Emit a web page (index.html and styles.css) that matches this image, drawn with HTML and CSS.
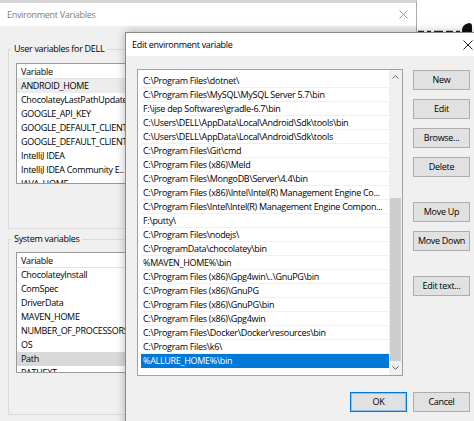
FILE: index.html
```html
<!DOCTYPE html>
<html lang="en">
<head>
<meta charset="utf-8">
<title>Environment Variables</title>
<link rel="stylesheet" href="styles.css">
</head>
<body>
<div class="desk">
  <svg class="bgmarks" width="58" height="12" viewBox="0 0 58 12">
    <path d="M2 10.5h6M11 10.5h4M18 10.5h9M30 10.5h7M40 10.5h4" stroke="#222" stroke-width="1.6"/>
    <path d="M46 9c0-3 2-5 4-6l3-1c2 0 3 1 3 3v6h-10z" fill="#111"/>
  </svg>

  <div class="win back">
    <div class="titlebar">
      <span class="title">Environment Variables</span>
      <svg class="close" width="9" height="9" viewBox="0 0 9 9"><path d="M0.5 0.5L8.5 8.5M8.5 0.5L0.5 8.5" stroke="#9a9a9a" stroke-width="1"/></svg>
    </div>
    <div class="wbody">
      <fieldset class="group group-user">
        <legend>User variables for DELL</legend>
        <div class="vlist">
          <div class="vhead">Variable</div>
          <div class="vrow hl">ANDROID_HOME</div>
          <div class="vrow">ChocolateyLastPathUpdate</div>
          <div class="vrow">GOOGLE_API_KEY</div>
          <div class="vrow">GOOGLE_DEFAULT_CLIENT_ID</div>
          <div class="vrow">GOOGLE_DEFAULT_CLIENT_SECRET</div>
          <div class="vrow">IntelliJ IDEA</div>
          <div class="vrow">IntelliJ IDEA Community E..</div>
          <div class="vrow">JAVA_HOME</div>
        </div>
      </fieldset>
      <fieldset class="group group-sys">
        <legend>System variables</legend>
        <div class="vlist">
          <div class="vhead">Variable</div>
          <div class="vrow">ChocolateyInstall</div>
          <div class="vrow">ComSpec</div>
          <div class="vrow">DriverData</div>
          <div class="vrow">MAVEN_HOME</div>
          <div class="vrow">NUMBER_OF_PROCESSORS</div>
          <div class="vrow">OS</div>
          <div class="vrow sel-gray">Path</div>
          <div class="vrow">PATHEXT</div>
        </div>
      </fieldset>
    </div>
  </div>

  <div class="win front">
    <div class="titlebar front-title">
      <span class="title">Edit environment variable</span>
      <svg class="close" width="10" height="10" viewBox="0 0 10 10"><path d="M0.5 0.5L9.5 9.5M9.5 0.5L0.5 9.5" stroke="#222" stroke-width="1"/></svg>
    </div>
    <div class="fbody">
      <div class="frow">
        <div class="plist">
          <div class="items">
            <div class="item">C:\Program Files\dotnet\</div>
            <div class="item">C:\Program Files\MySQL\MySQL Server 5.7\bin</div>
            <div class="item">F:\ijse dep Softwares\gradle-6.7\bin</div>
            <div class="item">C:\Users\DELL\AppData\Local\Android\Sdk\tools\bin</div>
            <div class="item">C:\Users\DELL\AppData\Local\Android\Sdk\tools</div>
            <div class="item">C:\Program Files\Git\cmd</div>
            <div class="item">C:\Program Files (x86)\Meld</div>
            <div class="item">C:\Program Files\MongoDB\Server\4.4\bin</div>
            <div class="item">C:\Program Files (x86)\Intel\Intel(R) Management Engine Co...</div>
            <div class="item">C:\Program Files\Intel\Intel(R) Management Engine Compon...</div>
            <div class="item">F:\putty\</div>
            <div class="item">C:\Program Files\nodejs\</div>
            <div class="item">C:\ProgramData\chocolatey\bin</div>
            <div class="item">%MAVEN_HOME%\bin</div>
            <div class="item">C:\Program Files (x86)\Gpg4win\..\GnuPG\bin</div>
            <div class="item">C:\Program Files (x86)\GnuPG</div>
            <div class="item">C:\Program Files (x86)\GnuPG\bin</div>
            <div class="item">C:\Program Files (x86)\Gpg4win</div>
            <div class="item">C:\Program Files\Docker\Docker\resources\bin</div>
            <div class="item">C:\Program Files\k6\</div>
            <div class="item selected">%ALLURE_HOME%\bin</div>
          </div>
          <div class="scrollbar">
            <div class="sb-btn"><svg width="7" height="4" viewBox="0 0 7 4"><path d="M0.5 3.5L3.5 0.7L6.5 3.5" fill="none" stroke="#606060" stroke-width="1"/></svg></div>
            <div class="sb-track"><div class="sb-thumb"></div></div>
            <div class="sb-btn"><svg width="7" height="4" viewBox="0 0 7 4"><path d="M0.5 0.5L3.5 3.3L6.5 0.5" fill="none" stroke="#606060" stroke-width="1"/></svg></div>
          </div>
        </div>
        <div class="btncol">
          <div class="btn">New</div>
          <div class="btn">Edit</div>
          <div class="btn">Browse...</div>
          <div class="btn">Delete</div>
          <div class="btn gap-lg">Move Up</div>
          <div class="btn">Move Down</div>
          <div class="btn gap-lg">Edit text...</div>
        </div>
      </div>
      <div class="actions">
        <div class="btn btn-default">OK</div>
        <div class="btn">Cancel</div>
      </div>
    </div>
  </div>
</div>
</body>
</html>
```

FILE: styles.css
```css
* { box-sizing: border-box; }
html, body { margin: 0; padding: 0; }
body {
  width: 474px;
  height: 421px;
  overflow: hidden;
  background: #ffffff;
  font-family: "Open Sans", "Noto Sans", sans-serif;
  font-size: 9px;
  letter-spacing: -0.3px;
  color: #000;
}
.desk { position: relative; width: 474px; height: 421px; overflow: hidden; }

.bgmarks { position: absolute; left: 416px; top: 21px; }

.win { position: absolute; background: #f0f0f0; }

.titlebar {
  display: flex;
  align-items: center;
  justify-content: space-between;
  height: 23px;
  background: #fff;
  white-space: nowrap;
}

/* back window */
.back {
  left: -1px;
  top: 0;
  width: 418px;
  height: 440px;
  border: 1px solid #a9a9a9;
  border-top: 3px solid #d5d5d5;
}
.back .titlebar { padding: 0 8px 0 7px; }
.back .title { color: #7d7d7d; }
.wbody { padding: 16px 0 0 8px; }

.group {
  margin: 0;
  padding: 7px 7px 44px 7px;
  border: 1px solid #dadada;
  width: 420px;
  min-width: 0;
}
.group legend {
  padding: 0 3px;
  margin-left: -5px;
  line-height: 14px;
  font-size: 9px;
}
.group-sys { margin-top: 3px; padding-top: 6px; padding-bottom: 41px; }

.vlist {
  height: 121px;
  width: 400px;
  background: #fff;
  border: 1px solid #9a9a9a;
  padding-top: 1px;
  overflow: hidden;
}
.vhead, .vrow {
  height: 14px;
  line-height: 14px;
  padding-left: 4px;
  white-space: nowrap;
  overflow: hidden;
}
.vhead { box-shadow: inset 0 -1px 0 #e5e5e5; }
.vrow.hl { background: #ececec; }
.vrow.sel-gray { background: #d9d9d9; }

/* front dialog */
.front {
  left: 125px;
  top: 32px;
  width: 358px;
  height: 400px;
  border: 1px solid #8a8a8a;
  box-shadow: 0 0 9px rgba(0, 0, 0, 0.28);
}
.front-title { padding: 0 9px 0 6px; height: 23px; }
.front .title { color: #000; }

.fbody { padding: 13px 12px 0 11px; }
.frow { display: flex; gap: 10px; align-items: flex-start; }

.plist {
  display: flex;
  width: 266px;
  height: 307px;
  background: #fff;
  border: 1px solid #a0a0a0;
}
.items {
  flex: 1;
  padding: 4px 0 0 3px;
  overflow: hidden;
}
.item {
  height: 14px;
  line-height: 13px;
  padding-left: 2px;
  border-bottom: 1px solid #f0f0f0;
  white-space: nowrap;
  overflow: hidden;
}
.item.selected { background: #0078d7; color: #fff; border-bottom-color: #0078d7; }

.scrollbar {
  width: 13px;
  display: flex;
  flex-direction: column;
  background: #f0f0f0;
}
.sb-btn {
  height: 14px;
  display: flex;
  align-items: center;
  justify-content: center;
}
.sb-track { flex: 1; display: flex; flex-direction: column; justify-content: flex-end; }
.sb-thumb { height: 163px; margin: 0 1px; background: #cdcdcd; }

.btncol { display: flex; flex-direction: column; gap: 9px; padding-top: 1px; width: 57px; }
.btn {
  width: 57px;
  height: 20px;
  line-height: 18px;
  text-align: center;
  background: #e1e1e1;
  border: 1px solid #adadad;
  white-space: nowrap;
}
.btncol .gap-lg { margin-top: 16px; }
.actions { display: flex; justify-content: flex-end; gap: 6px; margin-top: 16px; }
.btn-default { border-color: #0078d7; box-shadow: inset 0 0 0 1px #8ec2ec; }
```
